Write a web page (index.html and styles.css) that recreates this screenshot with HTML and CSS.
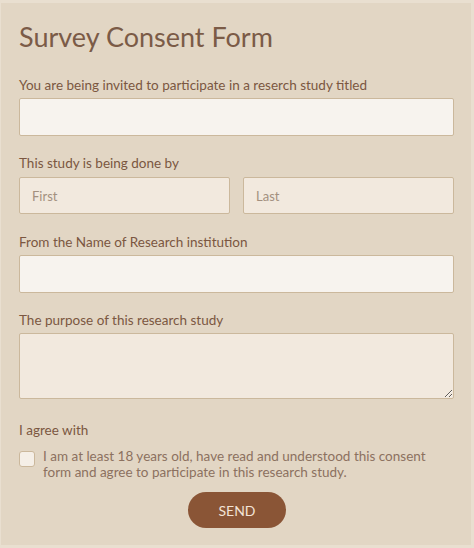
FILE: index.html
```html
<!DOCTYPE html>
<html lang="en">
<head>
    <meta charset="UTF-8">
    <meta name="viewport" content="width=device-width, initial-scale=1.0">
    <title>Survey Consent Form</title>
    <link rel="stylesheet" href="styles.css">
</head>
<body>

    <div class="form-frame">
        <h1 class="form-title">Survey Consent Form</h1>
        <form class="consent-form" onsubmit="event.preventDefault()">
            <label class="field-label" for="title">You are being invited to participate in a reserch study titled</label>
            <input type="text" id="title" class="field-input light">

            <label class="field-label" for="first">This study is being done by</label>
            <div class="name-row">
                <input type="text" id="first" class="field-input" placeholder="First">
                <input type="text" id="last" class="field-input" placeholder="Last">
            </div>

            <label class="field-label" for="institution">From the Name of Research institution</label>
            <input type="text" id="institution" class="field-input light">

            <label class="field-label" for="purpose">The purpose of this research study</label>
            <textarea id="purpose" class="field-input field-area"></textarea>

            <div class="field-label agree-label">I agree with</div>
            <label class="check-row">
                <input type="checkbox" class="check-box">
                <span>I am at least 18 years old, have read and understood this consent form and agree to participate in this research study.</span>
            </label>

            <div class="send-row">
                <button type="submit" class="send-btn">SEND</button>
            </div>
        </form>
    </div>

</body>
</html>
```

FILE: styles.css
```css
* {
    box-sizing: border-box;
}

body {
    margin: 0;
    background: #e9dfd0;
    font-family: Lato, "Open Sans", sans-serif;
    width: 474px;
    height: 548px;
    padding: 3px 3px 3px 1px;
}

.form-frame {
    background: #e2d6c4;
    height: 100%;
    padding: 17px 17px 0 18px;
}

.form-title {
    margin: 0;
    font-size: 27px;
    line-height: 34px;
    font-weight: 400;
    color: #7b5b47;
}

.consent-form {
    display: flex;
    flex-direction: column;
    margin-top: 22px;
}

.field-label {
    display: block;
    font-size: 13.5px;
    line-height: 18px;
    color: #7b5741;
    margin-bottom: 4px;
}

.field-input {
    display: block;
    width: 100%;
    height: 38px;
    margin: 0 0 18px;
    padding: 0 12px;
    border: 1px solid #cbb89c;
    border-radius: 2px;
    background: #f2e9de;
    font-family: inherit;
    font-size: 13px;
    color: #7b5741;
    outline: none;
}

.field-input::placeholder {
    color: #a3907f;
}

.field-input.light {
    background: #f7f3ee;
}

.name-row {
    display: flex;
    gap: 13px;
    margin-top: 1px;
}

.name-row .field-input {
    height: 37px;
    margin-bottom: 19px;
}

.field-area {
    height: 66px;
    margin-bottom: 22px;
    resize: vertical;
}

.agree-label {
    margin-bottom: 9px;
}

.check-row {
    display: flex;
    gap: 8px;
    font-size: 13.5px;
    line-height: 16px;
    color: #8c7160;
}

.check-box {
    appearance: none;
    flex: none;
    width: 16px;
    height: 16px;
    margin: 3px 0 0;
    border: 1px solid #cbb89c;
    border-radius: 3px;
    background: #f5efe7;
}

.send-row {
    display: flex;
    justify-content: center;
    margin-top: 12px;
}

.send-btn {
    width: 98px;
    height: 36px;
    border: none;
    border-radius: 18px;
    background: #8a5536;
    color: #f3e4d6;
    font-family: inherit;
    font-size: 14px;
    cursor: pointer;
    margin-left: 1px;
}
```
